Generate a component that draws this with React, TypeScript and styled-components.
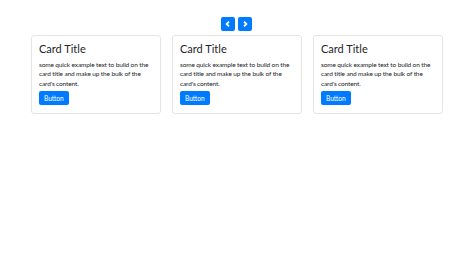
import React from "react";
import styled, { createGlobalStyle } from "styled-components";

const GlobalStyle = createGlobalStyle`
  body {
    margin: 0;
    background: #ffffff;
    font-family: Lato, "Open Sans", sans-serif;
    color: #212529;
  }
`;

const Page = styled.div`
  display: flex;
  flex-direction: column;
  align-items: center;
  padding-top: 17px;
`;

const Controls = styled.div`
  display: flex;
  gap: 3px;
  margin-left: -1px;
`;

const NavButton = styled.button`
  width: 14px;
  height: 14px;
  padding: 0;
  border: none;
  border-radius: 2px;
  background-color: #007bff;
  color: #ffffff;
  display: flex;
  align-items: center;
  justify-content: center;
  svg {
    width: 8px;
    height: 8px;
  }
`;

const CardRow = styled.div`
  display: flex;
  gap: 11px;
  margin-top: 4px;
`;

const Card = styled.div`
  width: 130px;
  height: 79px;
  box-sizing: border-box;
  border: 1px solid rgba(0, 0, 0, 0.1);
  border-radius: 3px;
  padding: 6px 7px 7px 7px;
  display: flex;
  flex-direction: column;
  align-items: flex-start;
`;

const Title = styled.div`
  font-size: 11px;
  line-height: 14px;
  font-weight: 400;
  margin-bottom: 4px;
`;

const Text = styled.p`
  margin: 0 0 3px 0;
  font-size: 6.5px;
  line-height: 9.3px;
  letter-spacing: -0.12px;
`;

const Button = styled.button`
  font-family: inherit;
  font-size: 6.6px;
  line-height: 14px;
  height: 14px;
  padding: 0 5px;
  border: none;
  border-radius: 2px;
  background-color: #007bff;
  color: #ffffff;
`;

const Chevron = ({ dir }: { dir: "left" | "right" }) => (
  <svg viewBox="0 0 8 8">
    <path
      d={dir === "left" ? "M5 1.6 L2.6 4 L5 6.4" : "M3 1.6 L5.4 4 L3 6.4"}
      fill="none"
      stroke="currentColor"
      strokeWidth="1.8"
    />
  </svg>
);

const cards = [1, 2, 3];

export default function App() {
  return (
    <>
      <GlobalStyle />
      <Page>
        <Controls>
          <NavButton aria-label="previous">
            <Chevron dir="left" />
          </NavButton>
          <NavButton aria-label="next">
            <Chevron dir="right" />
          </NavButton>
        </Controls>
        <CardRow>
          {cards.map(id => (
            <Card key={id}>
              <Title>Card Title</Title>
              <Text>
                some quick example text to build on the card title and make up
                the bulk of the card's content.
              </Text>
              <Button>Button</Button>
            </Card>
          ))}
        </CardRow>
      </Page>
    </>
  );
}
